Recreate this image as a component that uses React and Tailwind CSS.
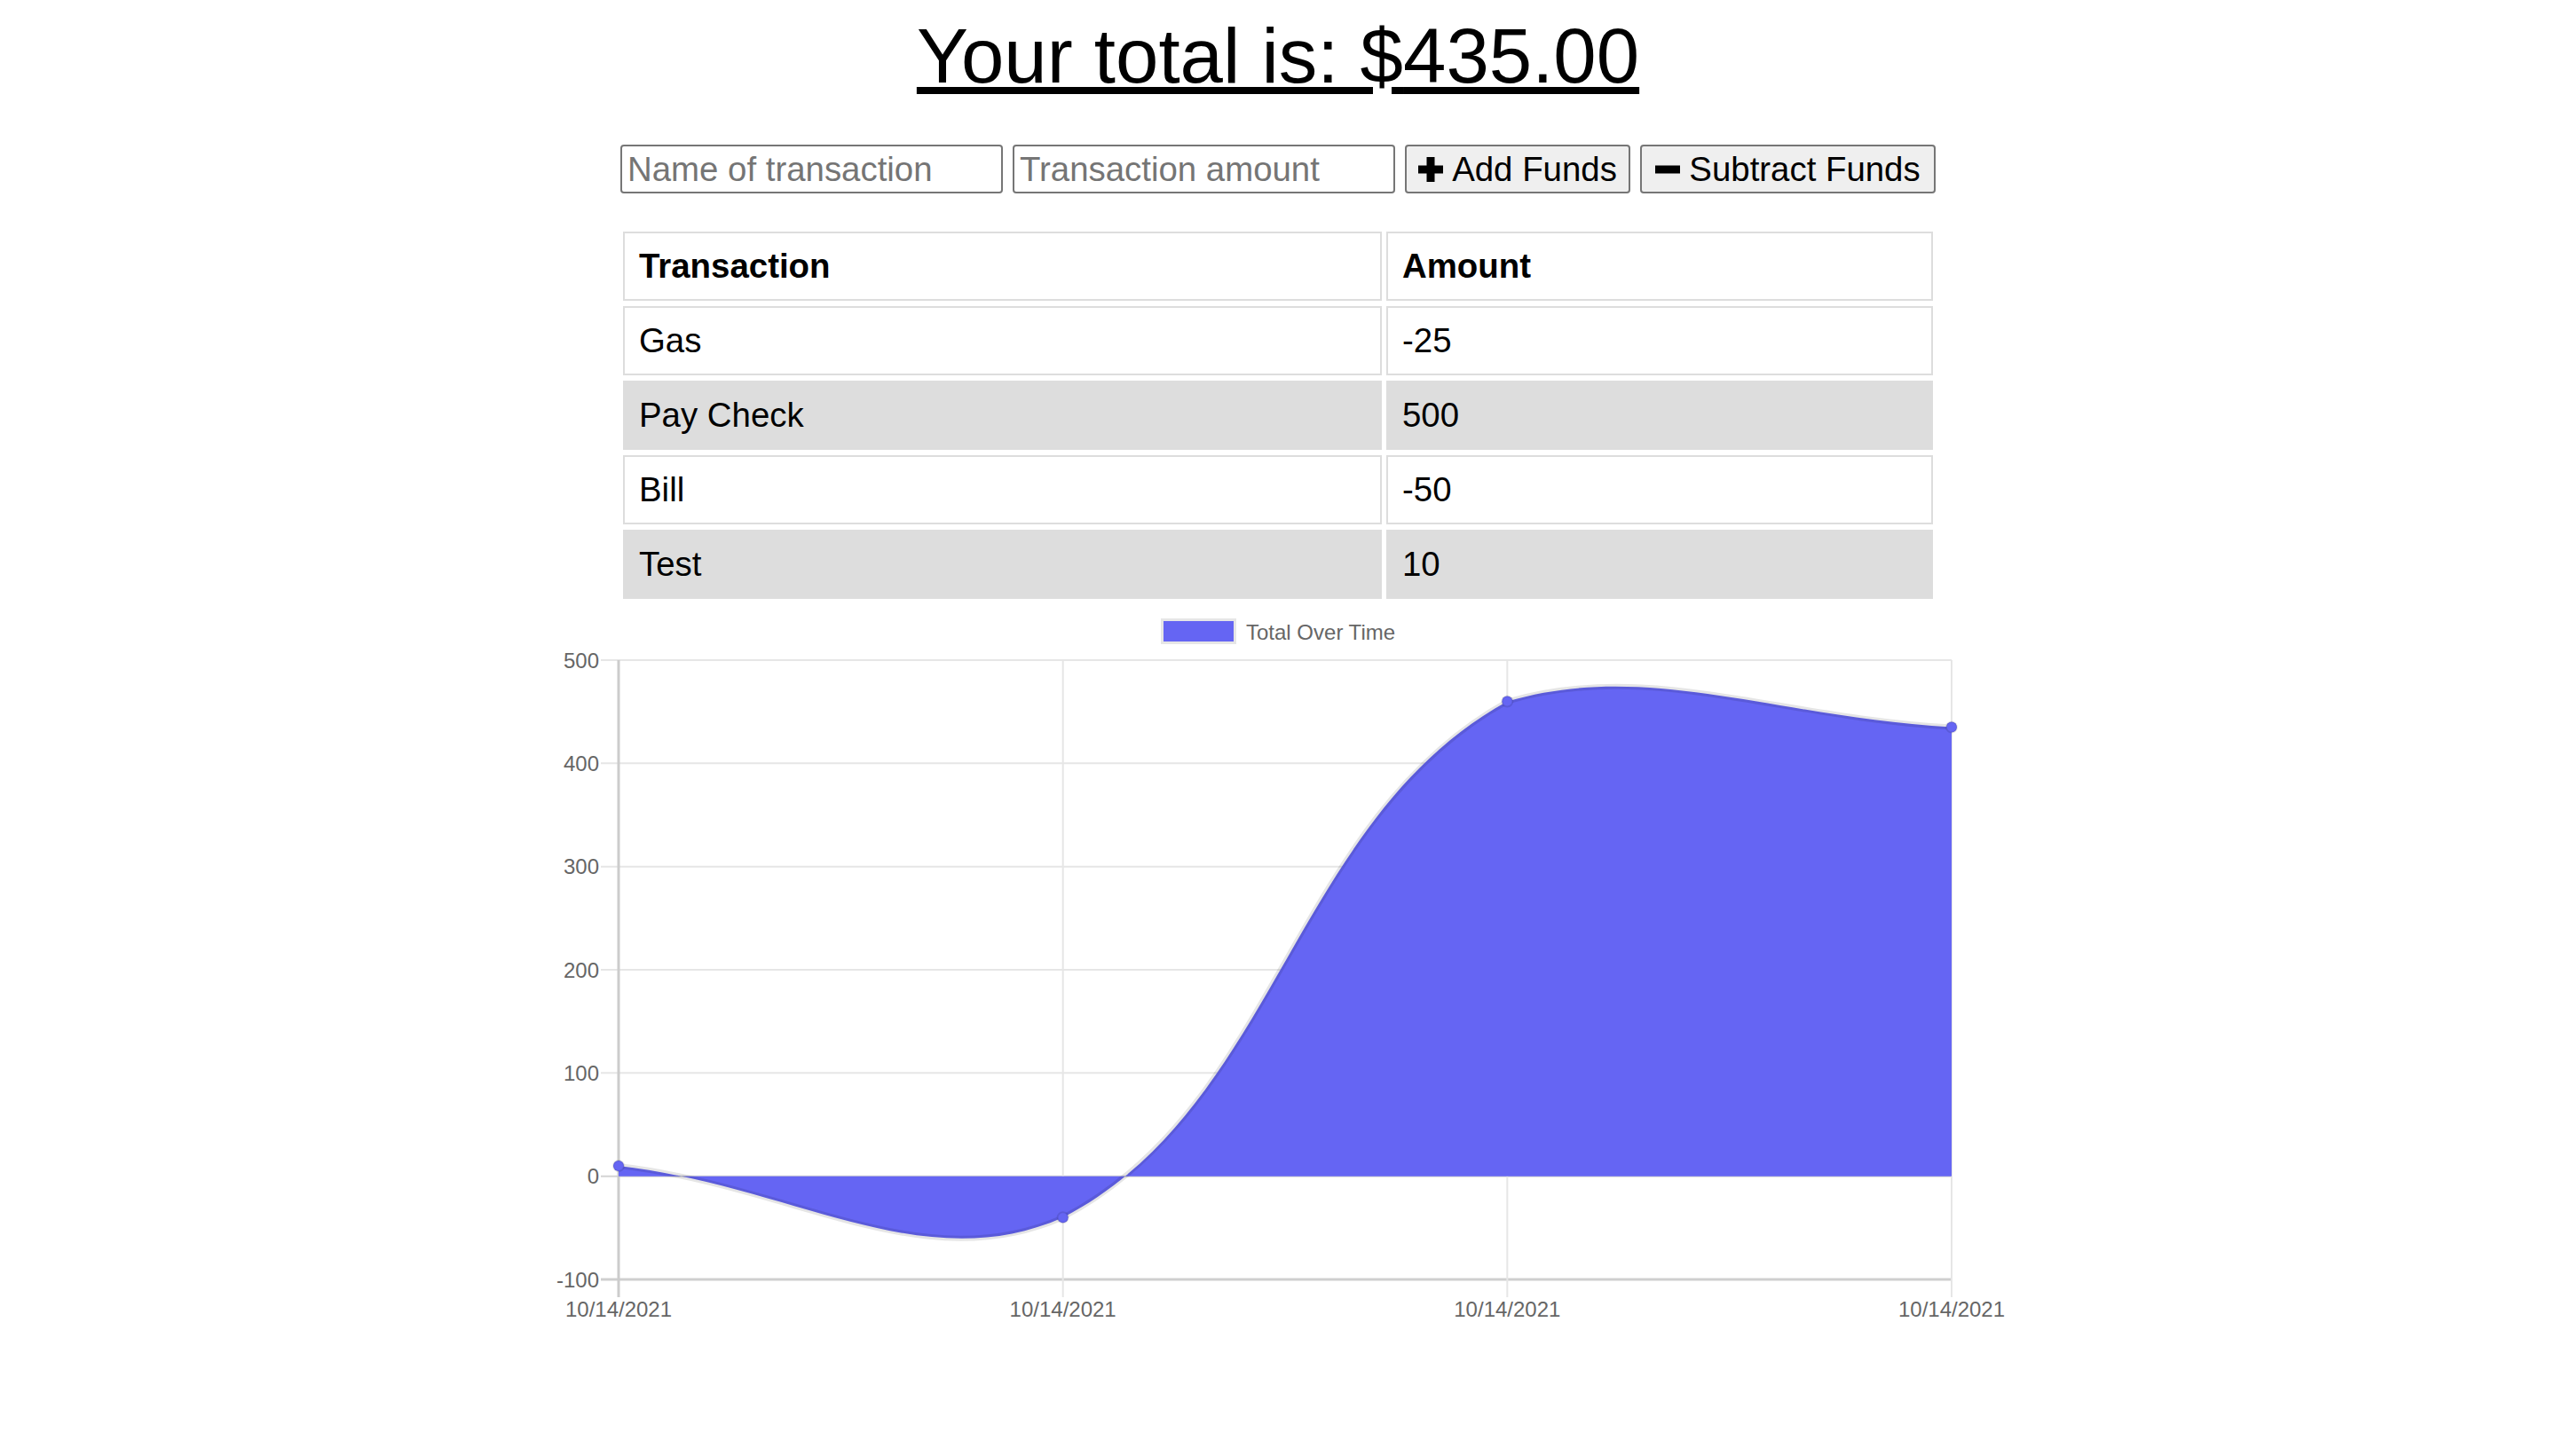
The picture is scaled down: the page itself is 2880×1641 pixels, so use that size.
import { useMemo } from "react";

const transactions = [
  { name: "Gas", value: -25 },
  { name: "Pay Check", value: 500 },
  { name: "Bill", value: -50 },
  { name: "Test", value: 10 },
];

function PlusIcon() {
  return (
    <svg width="28" height="28" viewBox="0 0 28 28">
      <rect x="9.5" y="0" width="9" height="28" fill="currentColor" />
      <rect x="0" y="9.5" width="28" height="9" fill="currentColor" />
    </svg>
  );
}

function MinusIcon() {
  return (
    <svg width="28" height="28" viewBox="0 0 28 28">
      <rect x="0" y="9.5" width="28" height="9" fill="currentColor" />
    </svg>
  );
}

// chart.js style line chart, drawn in page coordinates
function TotalChart({ values }) {
  const top = 745;
  const bottom = 1443;
  const left = 697;
  const right = 2199;
  const max = 500;
  const min = -100;
  const ticks = [500, 400, 300, 200, 100, 0, -100];

  const yOf = (v) => top + ((max - v) * (bottom - top)) / (max - min);
  const step = (right - left) / (values.length - 1);

  const { line, area, pts } = useMemo(() => {
    const pts = values.map((v, i) => ({ x: left + i * step, y: yOf(v) }));
    const clampY = (v) => Math.min(Math.max(v, top), bottom);
    const clampX = (v) => Math.min(Math.max(v, left), right);
    const cps = pts.map((p, i) => {
      const prev = pts[i - 1] || p;
      const next = pts[i + 1] || p;
      const d01 = Math.hypot(p.x - prev.x, p.y - prev.y);
      const d12 = Math.hypot(next.x - p.x, next.y - p.y);
      const s01 = d01 / (d01 + d12) || 0;
      const s12 = d12 / (d01 + d12) || 0;
      const fa = 0.4 * s01;
      const fb = 0.4 * s12;
      return {
        prev: { x: clampX(p.x - fa * (next.x - prev.x)), y: clampY(p.y - fa * (next.y - prev.y)) },
        next: { x: clampX(p.x + fb * (next.x - prev.x)), y: clampY(p.y + fb * (next.y - prev.y)) },
      };
    });
    let d = `M ${pts[0].x} ${pts[0].y}`;
    for (let i = 1; i < pts.length; i++) {
      const a = cps[i - 1].next;
      const b = cps[i].prev;
      d += ` C ${a.x} ${a.y} ${b.x} ${b.y} ${pts[i].x} ${pts[i].y}`;
    }
    const zero = yOf(0);
    const area = `${d} L ${pts[pts.length - 1].x} ${zero} L ${pts[0].x} ${zero} Z`;
    return { line: d, area, pts };
  }, [values]);

  return (
    <svg
      className="mx-auto mt-[6px] block h-[840px] w-[1680px] font-['Liberation_Sans',Arial,sans-serif]"
      viewBox="600 682 1680 840"
    >
      {/* legend */}
      <rect x="1309.5" y="699.5" width="82" height="26" fill="#6565f3" stroke="#e6e6e6" strokeWidth="3" />
      <text x="1404" y="722" fontSize="24" fill="#666">
        Total Over Time
      </text>

      {/* y grid */}
      {ticks.map((t) => (
        <g key={t}>
          <line
            x1="677"
            x2={right}
            y1={yOf(t)}
            y2={yOf(t)}
            stroke={t === -100 ? "#cfcfcf" : t === 0 ? "#d4d4d4" : "#e6e6e6"}
            strokeWidth={t === -100 ? 3 : 2}
          />
          <text x="675" y={yOf(t) + 8.5} fontSize="24" fill="#666" textAnchor="end">
            {t}
          </text>
        </g>
      ))}

      {/* x grid */}
      {pts.map((p, i) => (
        <g key={i}>
          <line
            x1={p.x}
            x2={p.x}
            y1={top}
            y2="1463"
            stroke={i === 0 ? "#cccccc" : "#e6e6e6"}
            strokeWidth={i === 0 ? 3 : 2}
          />
          <text x={p.x} y="1485" fontSize="24" fill="#666" textAnchor="middle">
            10/14/2021
          </text>
        </g>
      ))}

      <path d={area} fill="#6565f3" />
      <path d={line} fill="none" stroke="rgba(0,0,0,0.1)" strokeWidth="6" />
      {pts.map((p, i) => (
        <circle key={i} cx={p.x} cy={p.y} r="6" fill="#6565f3" stroke="rgba(0,0,0,0.1)" strokeWidth="2" />
      ))}
    </svg>
  );
}

export default function App() {
  const total = transactions.reduce((sum, t) => sum + t.value, 0);

  // running total, oldest first
  const history = [];
  [...transactions].reverse().reduce((sum, t) => {
    history.push(sum + t.value);
    return sum + t.value;
  }, 0);

  return (
    <div className="min-h-screen bg-white pt-[13px] font-['Liberation_Sans',Arial,sans-serif] text-black">
      <h1 className="text-center text-[87px] leading-[100px] underline decoration-[8px] underline-offset-[5px]">
        Your total is: ${total.toFixed(2)}
      </h1>

      <div className="mt-[50px] flex justify-center gap-[11px]">
        <input
          type="text"
          placeholder="Name of transaction"
          className="h-[55px] w-[431px] rounded-[4px] border-2 border-[#767676] bg-white px-[6px] text-[38.4px] outline-none placeholder:text-[#757575]"
        />
        <input
          type="number"
          placeholder="Transaction amount"
          className="h-[55px] w-[431px] rounded-[4px] border-2 border-[#767676] bg-white px-[6px] text-[38.4px] outline-none placeholder:text-[#757575]"
        />
        <button className="flex h-[55px] w-[254px] items-center justify-center gap-[10px] rounded-[4px] border-2 border-[#767676] bg-[#efefef] text-[38.4px]">
          <PlusIcon /> Add Funds
        </button>
        <button className="flex h-[55px] w-[333px] items-center justify-center gap-[10px] rounded-[4px] border-2 border-[#767676] bg-[#efefef] text-[38.4px]">
          <MinusIcon /> Subtract Funds
        </button>
      </div>

      <div className="mx-auto mt-[43px] grid w-[1476px] grid-cols-[855px_616px] gap-x-[5px] gap-y-[6px] text-[38.4px]">
        <div className="flex h-[78px] items-center border-2 border-[#dddddd] px-[16px] font-bold">Transaction</div>
        <div className="flex h-[78px] items-center border-2 border-[#dddddd] px-[16px] font-bold">Amount</div>
        {transactions.map((t, i) => (
          <div key={t.name} className="contents">
            <div
              className={`flex h-[78px] items-center border-2 border-[#dddddd] px-[16px] ${i % 2 === 1 ? "bg-[#dddddd]" : "bg-white"}`}
            >
              {t.name}
            </div>
            <div
              className={`flex h-[78px] items-center border-2 border-[#dddddd] px-[16px] ${i % 2 === 1 ? "bg-[#dddddd]" : "bg-white"}`}
            >
              {t.value}
            </div>
          </div>
        ))}
      </div>

      <TotalChart values={history} />
    </div>
  );
}
